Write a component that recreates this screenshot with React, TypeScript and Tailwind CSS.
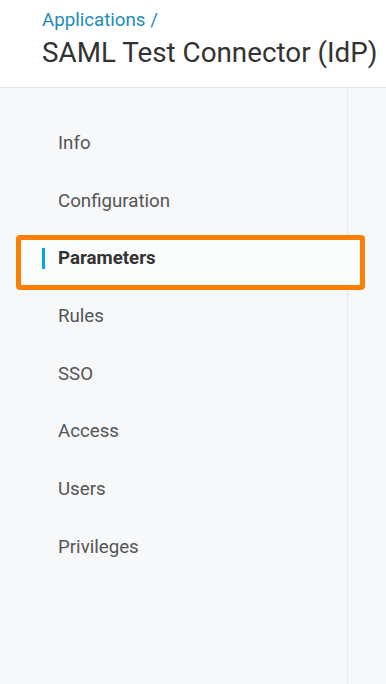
import React from 'react';

const items = ['Info', 'Configuration', 'Parameters', 'Rules', 'SSO', 'Access', 'Users', 'Privileges'];

export default function App() {
    const active = 'Parameters';

    return (
        <div className="h-[684px] w-[386px] overflow-hidden flex flex-col bg-[#f7f8fa] font-['Roboto',sans-serif]">
            {/* Header */}
            <div className="h-[88px] shrink-0 bg-white border-b border-[#e4e6ea] pl-[42px] pt-[8px]">
                <div className="text-[18.7px] leading-[24px] text-[#1b8cbb]">Applications /</div>
                <h1 className="mt-[4px] text-[27.8px] leading-[34px] text-[#333] whitespace-nowrap">SAML Test Connector (IdP)</h1>
            </div>

            {/* Body */}
            <div className="flex flex-1">
                <div className="w-[348px] shrink-0 border-r border-[#e6e8eb] pt-[26px]">
                    {items.map(item => (
                        <div key={item} className="relative h-[57.7px] flex items-center pl-[42px]">
                            {item === active ? (
                                <>
                                    <div className="absolute left-[16px] top-[6px] w-[349px] h-[55px] border-[5px] border-[#ff8000] rounded-[4px] bg-[#fbfcfc]" />
                                    <span className="relative w-[3px] h-[21px] bg-[#00a8e1] mr-[13px]" />
                                    <span className="relative text-[18.7px] font-bold text-[#333]">{item}</span>
                                </>
                            ) : (
                                <span className="pl-[16px] text-[18.7px] text-[#555]">{item}</span>
                            )}
                        </div>
                    ))}
                </div>
                <div className="flex-1" />
            </div>
        </div>
    );
}
